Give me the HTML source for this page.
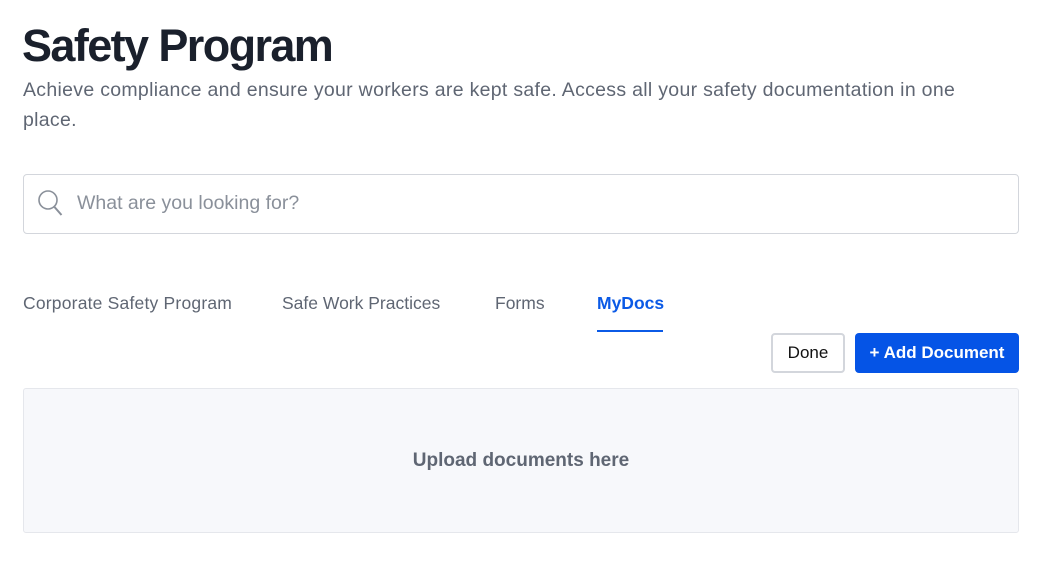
<!DOCTYPE html>
<html><head><style>
*{margin:0;padding:0;box-sizing:border-box}
body{width:1041px;height:561px;background:#fff;font-family:"Liberation Sans",sans-serif;position:relative;overflow:hidden}
.a{position:absolute;white-space:nowrap}
h1{position:absolute;left:22px;top:20px;font-size:45px;font-weight:bold;color:#1a202c;letter-spacing:-1.6px}
.p{left:23px;font-size:19.5px;color:#5f6673;letter-spacing:0.3px}
.search{position:absolute;left:23px;top:174px;width:996px;height:60px;border:1px solid #d3d6dc;border-radius:4px}
.tab{top:293px;font-size:17.5px;color:#5f6673}
.btn{position:absolute;top:333px;height:40px;border-radius:4px;font-size:17px;font-weight:bold;display:flex;align-items:center;justify-content:center}
.drop{position:absolute;left:23px;top:388px;width:996px;height:145px;background:#f7f8fb;border:1px solid #e5e7ec;border-radius:3px;display:flex;align-items:center;justify-content:center;font-size:19px;font-weight:bold;color:#5f6673}
</style></head><body>
<h1>Safety Program</h1>
<div class="a p" style="top:79px">Achieve compliance and ensure your workers are kept safe. Access all your safety documentation in one</div>
<div class="a p" style="top:109px">place.</div>
<div class="search">
<svg style="position:absolute;left:13px;top:14px" width="28" height="30" viewBox="0 0 28 30"><circle cx="11" cy="11" r="9" fill="none" stroke="#8a909a" stroke-width="1.6"/><path d="M17.5 18l7 8" stroke="#8a909a" stroke-width="2"/></svg>
<div class="a" style="left:53px;top:17px;font-size:19.5px;color:#8a909a">What are you looking for?</div>
</div>
<div class="a tab" style="left:23px;letter-spacing:0.2px">Corporate Safety Program</div>
<div class="a tab" style="left:282px">Safe Work Practices</div>
<div class="a tab" style="left:495px">Forms</div>
<div class="a tab" style="left:597px;color:#0b5ae6;font-weight:bold">MyDocs</div>
<div class="a" style="left:597px;top:330px;width:66px;height:2px;background:#0b5ae6"></div>
<div class="btn" style="left:771px;width:74px;border:2px solid #d3d6dc;color:#111;font-weight:normal">Done</div>
<div class="btn" style="left:855px;width:164px;background:#0554e6;color:#fff">+ Add Document</div>
<div class="drop">Upload documents here</div>
</body></html>
